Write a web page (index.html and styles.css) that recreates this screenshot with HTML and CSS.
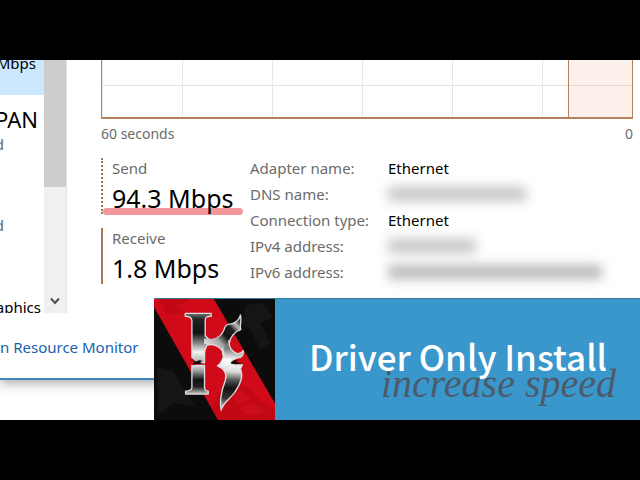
FILE: index.html
```html
<!DOCTYPE html>
<html lang="en">
<head>
<meta charset="utf-8">
<title>Driver Only Install</title>
<link rel="stylesheet" href="styles.css">
</head>
<body>
<main class="stage">
  <section class="window">
    <div class="body">
      <aside class="sidebar">
        <ul class="devices">
          <li class="device selected"><span class="rate">Mbps</span></li>
          <li class="device"><span class="name">PAN</span><span class="state">d</span></li>
          <li class="device"><span class="state">d</span></li>
          <li class="device last"><span class="rate">raphics</span></li>
        </ul>
        <div class="scrollbar">
          <div class="thumb"></div>
          <button class="scroll-down" type="button" aria-label="Scroll down">
            <svg viewBox="0 0 10 8" width="10" height="8"><path d="M1 1.5 5 6 9 1.5" fill="none" stroke="#505050" stroke-width="2"/></svg>
          </button>
        </div>
      </aside>
      <div class="panel">
        <div class="graph"><div class="activity"></div></div>
        <div class="axis"><span>60 seconds</span><span>0</span></div>
        <div class="details">
          <div class="rates">
            <div class="metric send">
              <div class="label">Send</div>
              <div class="value">94.3 Mbps</div>
              <div class="marker"></div>
            </div>
            <div class="metric receive">
              <div class="label">Receive</div>
              <div class="value">1.8 Mbps</div>
            </div>
          </div>
          <dl class="facts">
            <dt>Adapter name:</dt><dd>Ethernet</dd>
            <dt>DNS name:</dt><dd class="hidden-value"><i class="smudge dns"></i></dd>
            <dt>Connection type:</dt><dd>Ethernet</dd>
            <dt>IPv4 address:</dt><dd class="hidden-value"><i class="smudge ipv4"></i></dd>
            <dt>IPv6 address:</dt><dd class="hidden-value"><i class="smudge ipv6"></i></dd>
          </dl>
        </div>
      </div>
    </div>
    <footer class="footer"><a href="#">n Resource Monitor</a></footer>
  </section>
  <section class="banner">
    <svg class="logo" viewBox="12 12 364 364" role="img" aria-label="K logo">
      <defs>
        <linearGradient id="stem" x1="0" y1="0" x2="0" y2="1">
          <stop offset="0" stop-color="#777"/><stop offset=".12" stop-color="#222"/><stop offset=".4" stop-color="#111"/><stop offset=".58" stop-color="#777"/><stop offset=".78" stop-color="#f4f4f4"/><stop offset="1" stop-color="#aaa"/>
        </linearGradient>
        <linearGradient id="foot" x1="0" y1="0" x2="0" y2="1">
          <stop offset="0" stop-color="#ddd"/><stop offset=".2" stop-color="#999"/><stop offset=".5" stop-color="#111"/><stop offset=".75" stop-color="#222"/><stop offset="1" stop-color="#ccc"/>
        </linearGradient>
        <linearGradient id="arm" gradientUnits="userSpaceOnUse" x1="80" y1="130" x2="180" y2="40">
          <stop offset="0" stop-color="#eee"/><stop offset=".35" stop-color="#aaa"/><stop offset=".55" stop-color="#111"/><stop offset=".75" stop-color="#222"/><stop offset=".88" stop-color="#bbb"/><stop offset="1" stop-color="#333"/>
        </linearGradient>
        <linearGradient id="blade" gradientUnits="userSpaceOnUse" x1="150" y1="120" x2="140" y2="305">
          <stop offset="0" stop-color="#777"/><stop offset=".2" stop-color="#fff"/><stop offset=".38" stop-color="#ddd"/><stop offset=".52" stop-color="#555"/><stop offset=".65" stop-color="#111"/><stop offset=".82" stop-color="#333"/><stop offset="1" stop-color="#ddd"/>
        </linearGradient>
      </defs>
      <path fill="#0c0c0d" d="M12 12h364v364H12z"/>
      <path fill="#d00a18" d="M12 12H192L376 326V376H205L12 36Z"/>
      <path fill="#bd0714" d="M30 12h90l-40 22 30 18-62 8zM215 285l40-18 42 12 34 38 45 25v34H205l-22-37z" opacity=".7"/>
      <path fill="#df1723" d="m246 296 32-9 25 29-38 10zm20 45 45-16 41 28-62 9z" opacity=".4"/>
      <path fill="#151516" d="m290 30 50-8 30 44-38 20 30 60-30 15-30-55-28-20zM20 215l50 15 35 57 30 48-60-10-50 34z"/>
      <g transform="translate(90 39)" stroke="#ddd" stroke-width="4" stroke-linejoin="round">
        <path fill="url(#arm)" d="M72 75Q75 94 93 95C112 94 126 82 132 67C136 49 145 47 157 48C169 43 180 35 182 21C188 36 178 49 183 65C165 70 150 88 148 108L130 145L128 130C117 112 94 104 72 115Z"/>
        <path fill="url(#blade)" d="M129 125C126 105 139 96 148 99C146 117 156 132 172 137Q184 139 190 128Q193 144 180 149L170 151L155 159L153 168L168 171H188L182 184C191 204 183 228 166 252C151 275 131 282 124 307C117 278 127 244 137 216C143 193 130 181 113 174C129 165 126 150 134 143Z"/>
        <path fill="url(#stem)" d="M16 16H94V25Q76 24 76 36V84Q88 92 84 109Q73 121 74 149V165H48L44 157L36 148V37Q34 25 16 25Z"/>
        <path fill="url(#foot)" d="M36 173H74V240Q74 249 85 250V259H17V250Q36 249 36 240Z"/>
      </g>
      <path fill="url(#arm)" transform="translate(90 39)" d="M73 91Q99 101 129 80Q137 56 155 53L176 42 178 62Q149 77 143 106L132 123Q107 98 73 110Z"/>
      <path fill="#180c0d" transform="translate(90 39)" d="m37 151 10 10 11-4 9 2-6 5 9 4-22 1-12 3 8-7zm115 14 11-8 13-1-8 6 19 6-20 1-12-2z"/>
    </svg>
    <div class="title-box">
      <h1 class="title">Driver Only Install</h1>
      <p class="subtitle">increase speed</p>
    </div>
  </section>
</main>
</body>
</html>
```
FILE: styles.css
```css
* { box-sizing: border-box; }
body {
  margin: 0;
  min-height: 100vh;
  padding: 60px 0;
  background: #000;
  color: #000;
  font: 15px/20px "Noto Sans", "Open Sans", sans-serif;
}
ul, dl, dd, h1, p { margin: 0; padding: 0; }
.stage {
  position: relative;
  min-height: calc(100vh - 120px);
  background: #fff;
  overflow: hidden;
}
.window {
  border-bottom: 2px solid #4585b9;
  box-shadow: 0 2px 12px rgba(0, 0, 0, .4);
}
.body { display: flex; height: 253px; }
.sidebar { display: flex; width: 67px; border-right: 1px solid #e3e3e3; }
.devices {
  width: 44px;
  overflow: hidden;
  list-style: none;
  display: flex;
  flex-direction: column;
}
.device {
  display: flex;
  flex-direction: column;
  align-items: flex-end;
  height: 81px;
  flex: none;
  padding-top: 12px;
}
.device.selected { height: 35px; padding: 0; background: #cce8ff; justify-content: flex-start; }
.device.selected .rate { margin-top: -7px; padding-right: 8px; }
.name { font-size: 22px; line-height: 24px; padding-right: 6px; }
.state { padding-right: 40px; color: #666; margin-top: 3px; }
.device:nth-child(3) { padding-top: 36px; }
.device.last { padding-top: 40px; }
.device.last .rate { padding-right: 3px; }
.scrollbar {
  width: 22px;
  background: #f0f0f0;
  display: flex;
  flex-direction: column;
  justify-content: space-between;
}
.thumb { height: 127px; background: #cdcdcd; }
.scroll-down {
  border: 0;
  padding: 0;
  height: 24px;
  background: none;
  display: grid;
  place-items: center;
}
.panel { flex: 1; padding: 0 7px 0 34px; min-width: 0; }
.graph {
  height: 59px;
  border: solid #b5825e;
  border-width: 0 1px 2px;
  display: flex;
  justify-content: flex-end;
  background:
    linear-gradient(#e9e2dc, #e9e2dc) 0 25px / 100% 1px no-repeat,
    repeating-linear-gradient(90deg, #ece6de 0 1px, transparent 1px 90px) 80px 0;
}
.activity {
  width: 12%;
  border-left: 1px solid #b5825e;
  background: linear-gradient(#e6d5ca, #e6d5ca) 0 25px / 100% 1px no-repeat #fbf1ea;
}
.axis {
  display: flex;
  justify-content: space-between;
  color: #6b6b6b;
  font-size: 14px;
  padding-top: 5px;
}
.details { display: flex; padding-top: 14px; }
.rates { width: 149px; flex: none; display: flex; flex-direction: column; gap: 14px; }
.metric { position: relative; height: 56px; padding-left: 9px; border-left: 2px solid #a97856; }
.metric.send { border-left-style: dotted; }
.label { color: #6b6b6b; }
.value { position: relative; z-index: 1; font-size: 25px; line-height: 40px; white-space: nowrap; }
.marker {
  position: absolute;
  left: 0;
  bottom: -1px;
  width: 140px;
  height: 7px;
  border-radius: 4px;
  background: #f4979b;
}
.facts {
  flex: 1;
  display: grid;
  grid-template-columns: 138px 1fr;
  grid-auto-rows: 26px;
  line-height: 20px;
}
.facts dt { color: #6b6b6b; }
.hidden-value { padding-top: 3px; }
.smudge { display: block; height: 14px; filter: blur(6px); background: #c4c4c4; }
.dns { width: 138px; }
.ipv4 { width: 88px; }
.ipv6 { width: 214px; background: #b8b8b8; }
.footer { height: 65px; padding: 24px 0 0; font-size: 15px; }
.footer a { color: #1a5fae; text-decoration: none; }
.banner {
  position: absolute;
  left: 154px;
  right: 0;
  bottom: 0;
  height: 122px;
  display: flex;
  background: #3a97cc;
  border-top: 1px solid #397a9c;
}
.logo { width: 121px; height: 121px; flex: none; }
.title-box { flex: 1; padding: 31px 24px 0 34px; }
.title {
  color: #fff;
  font: 500 35px/52px "Noto Sans CJK SC", "Noto Sans", sans-serif;
  white-space: nowrap;
}
.subtitle {
  margin-top: -18px;
  text-align: right;
  color: #4c5b6c;
  font: italic 40px/40px "Liberation Serif", serif;
  white-space: nowrap;
}
```
